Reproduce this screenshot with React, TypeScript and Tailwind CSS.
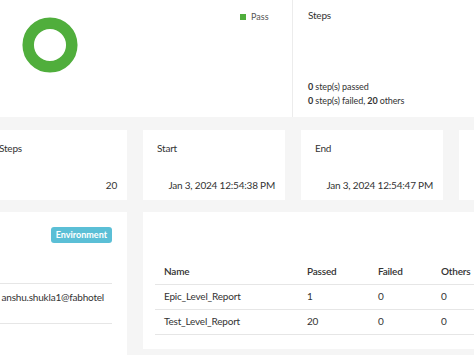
import React from 'react';

const font = { fontFamily: 'Lato, "Liberation Sans", sans-serif' };

const StatCard: React.FC<{ label: string; value: string }> = ({ label, value }) => (
  <div className="w-[142px] h-[70px] shrink-0 bg-white flex flex-col justify-between pt-[11px] pb-[8px] pl-[14px] pr-[10px]">
    <div className="text-[10px] leading-[14px] tracking-[-0.2px] text-[#333]">{label}</div>
    <div className="text-[10px] leading-[14px] tracking-[-0.2px] text-[#333] text-right whitespace-nowrap">{value}</div>
  </div>
);

const rows = [
  { name: 'Epic_Level_Report', passed: '1', failed: '0', others: '0' },
  { name: 'Test_Level_Report', passed: '20', failed: '0', others: '0' },
];

const App: React.FC = () => {
  return (
    <div className="w-[474px] h-[355px] overflow-hidden bg-[#f5f5f5]" style={font}>
      {/* Summary */}
      <div className="h-[117px] bg-white flex">
        <div className="w-[292px] shrink-0 flex items-start pt-[17px] pl-[22px]">
          <svg width="56" height="56" viewBox="0 0 56 56">
            <circle cx="28" cy="28" r="21.8" fill="none" stroke="#50ae3c" strokeWidth="11.5" />
          </svg>
          <div className="ml-[162px] -mt-[7px] flex items-center gap-[5px]">
            <span className="w-[6px] h-[6px] bg-[#50ae3c]" />
            <span className="text-[9px] text-[#555]">Pass</span>
          </div>
        </div>
        <div className="flex-1 border-l border-[#ececec] pl-[15px] pt-[8px] pb-[9px] flex flex-col justify-between">
          <div className="text-[10px] leading-[14px] tracking-[-0.2px] text-[#333]">Steps</div>
          <div className="text-[9px] leading-[14px] tracking-[-0.1px] text-[#333]">
            <div><b>0</b> step(s) passed</div>
            <div><b>0</b> step(s) failed, <b>20</b> others</div>
          </div>
        </div>
      </div>

      {/* Stat cards */}
      <div className="mt-[13px] -ml-[15px] flex gap-[16px]">
        <StatCard label="Steps" value="20" />
        <StatCard label="Start" value="Jan 3, 2024 12:54:38 PM" />
        <StatCard label="End" value="Jan 3, 2024 12:54:47 PM" />
        <StatCard label="" value="" />
      </div>

      {/* Details */}
      <div className="mt-[12px] -ml-[15px] flex items-start gap-[16px]">
        <div className="w-[142px] h-[160px] shrink-0 bg-white pt-[15px] pr-[15px]">
          <div className="flex justify-end">
            <span className="h-[16px] px-[5px] rounded-[3px] bg-[#5bbfd6] text-white text-[9px] font-bold leading-[16px]">
              Environment
            </span>
          </div>
          <div className="mt-[40px] border-t border-b border-[#e6e6e6] h-[41px] pt-[6px] text-[10px] tracking-[-0.2px] text-[#333] whitespace-nowrap overflow-hidden flex justify-end">
            <span className="pr-[8px]">anshu.shukla1@fabhotel</span>
          </div>
        </div>
        <div className="w-[360px] h-[137px] shrink-0 bg-white pl-[12px] pt-[47px]">
          <table className="w-full text-[10px] tracking-[-0.2px] text-[#333] border-collapse">
            <thead>
              <tr className="border-b border-[#e6e6e6] h-[25px]">
                <th className="text-left font-semibold pl-[9px] w-[143px]">Name</th>
                <th className="text-left font-semibold pl-[9px] w-[71px]">Passed</th>
                <th className="text-left font-semibold pl-[9px] w-[63px]">Failed</th>
                <th className="text-left font-semibold pl-[9px]">Others</th>
              </tr>
            </thead>
            <tbody>
              {rows.map((r) => (
                <tr key={r.name} className="border-b border-[#e6e6e6] h-[25px]">
                  <td className="pl-[9px]">{r.name}</td>
                  <td className="pl-[9px]">{r.passed}</td>
                  <td className="pl-[9px]">{r.failed}</td>
                  <td className="pl-[9px]">{r.others}</td>
                </tr>
              ))}
            </tbody>
          </table>
        </div>
      </div>
    </div>
  );
};

export default App;
